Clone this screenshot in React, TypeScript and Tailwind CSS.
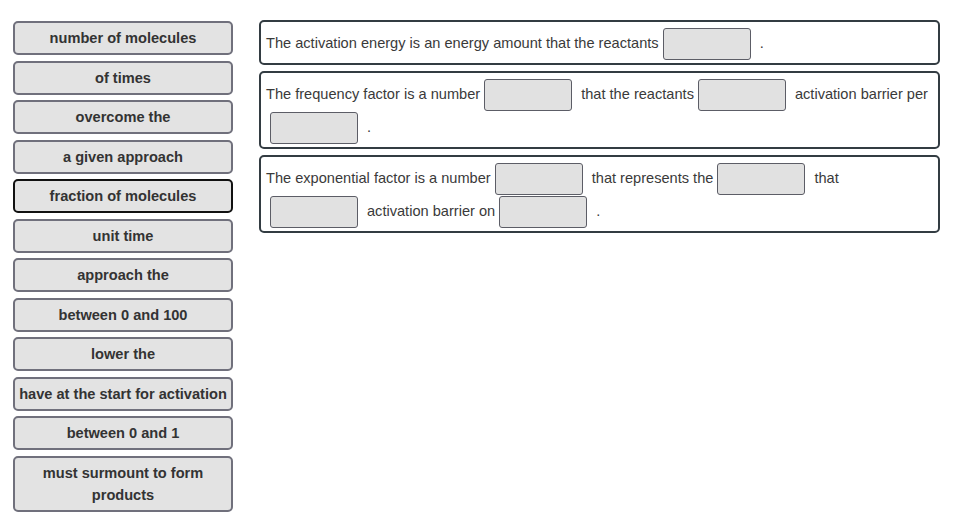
type Piece = string | { blank: true };

const answers = [
  "number of molecules",
  "of times",
  "overcome the",
  "a given approach",
  "fraction of molecules",
  "unit time",
  "approach the",
  "between 0 and 100",
  "lower the",
  "have at the start for activation",
  "between 0 and 1",
  "must surmount to form products",
];

const B: Piece = { blank: true };

// each statement is a list of lines, each line a run of text and drop targets
const statements: Piece[][][] = [
  [["The activation energy is an energy amount that the reactants", B, "."]],
  [
    ["The frequency factor is a number", B, "that the reactants", B, "activation barrier per"],
    [B, "."],
  ],
  [
    ["The exponential factor is a number", B, "that represents the", B, "that"],
    [B, "activation barrier on", B, "."],
  ],
];

function AnswerChip({ label, selected }: { label: string; selected?: boolean }) {
  return (
    <div
      className={`flex w-[220px] items-center justify-center rounded-[5px] border-2 bg-[#e3e3e3] py-[4px] text-center text-[14.6px] font-bold leading-[22px] text-[#333] ${
        selected ? "border-[#111]" : "border-[#70707c]"
      }`}
    >
      <span className={label.length > 30 ? "whitespace-nowrap" : "px-6"}>{label}</span>
    </div>
  );
}

function Blank() {
  return <span className="ml-[4px] mr-[9px] inline-block h-[32px] w-[88px] shrink-0 rounded-[3px] border border-[#5c5d66] bg-[#e1e1e1]" />;
}

function Statement({ lines }: { lines: Piece[][] }) {
  return (
    <div className="rounded-[5px] border-2 border-[#333c42] bg-white px-[5px] pt-[5px] pb-[3px]">
      {lines.map((line, i) => (
        <div key={i} className="flex h-[33px] items-center whitespace-nowrap text-[14.6px] text-[#3a3a3a]">
          {line.map((p, j) => (typeof p === "string" ? <span key={j}>{p}</span> : <Blank key={j} />))}
        </div>
      ))}
    </div>
  );
}

export default function App() {
  return (
    <div className="flex min-h-[526px] gap-[26px] bg-white pt-5 pl-[13px] font-['Liberation_Sans',Arial,sans-serif]">
      <div className="mt-px flex flex-col gap-[5.5px]">
        {answers.map((a) => (
          <AnswerChip key={a} label={a} selected={a === "fraction of molecules"} />
        ))}
      </div>
      <div className="flex w-[681px] flex-col gap-[6px] self-start">
        {statements.map((s, i) => (
          <Statement key={i} lines={s} />
        ))}
      </div>
    </div>
  );
}
